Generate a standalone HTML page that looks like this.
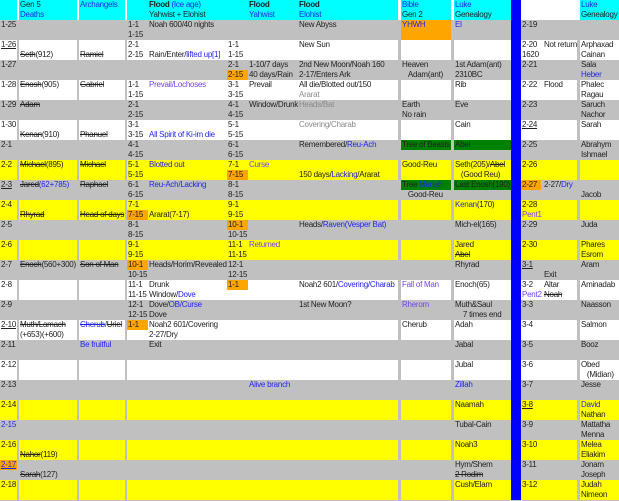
<!DOCTYPE html>
<html><head><meta charset="utf-8"><style>
*{margin:0;padding:0;box-sizing:border-box}
body{width:619px;height:501px;background:#c0c0c0;overflow:hidden;font-family:"Liberation Sans",Arial,sans-serif;font-size:8px;letter-spacing:-0.25px;color:#222}
table{border-collapse:separate;border-spacing:0;table-layout:fixed;width:619px}
td{height:20px;line-height:10px;vertical-align:top;white-space:nowrap;overflow:visible;padding:0 0 0 1px}
tr.g td{background:#c0c0c0}
tr.w td{background:#fff}
tr.y td{background:#ff0}
tr.h td{background:#0ff;height:20px}
td:nth-child(1),td:nth-child(2),td:nth-child(3){box-shadow:inset -2px 0 #c0c0c0}
td:nth-child(8),td:nth-child(9),td:nth-child(13){box-shadow:inset -3px 0 #c0c0c0}
tr.h td:nth-child(1),tr.h td:nth-child(2),tr.h td:nth-child(3){box-shadow:inset -2px 0 #fff}
tr.h td:nth-child(8),tr.h td:nth-child(9),tr.h td:nth-child(13){box-shadow:inset -3px 0 #fff}
tr td:nth-child(11){background:#0000ff !important;box-shadow:none}
tr.h td:nth-child(12),tr.h td:nth-child(13){background:#fff}
b{font-weight:bold}
.b{color:#2323f0}.p{color:#7040ff}.gy{color:#8a8a8a}
s{text-decoration:line-through}
u{text-decoration:underline}
.o{background:#ffa500;margin-left:-1px;padding-left:1px}
.gr{background:#008000;margin-left:-1px;padding-left:1px;margin-right:3px}
</style></head><body>
<table>
<colgroup><col style="width:19px"><col style="width:60px"><col style="width:48px"><col style="width:21px"><col style="width:79px"><col style="width:21px"><col style="width:50px"><col style="width:103px"><col style="width:53px"><col style="width:57px"><col style="width:10px"><col style="width:20px"><col style="width:39px"><col style="width:39px"></colgroup>
<tr class="h"><td></td><td>Gen 5<br><span class="b">Deaths</span></td><td><span class="b">Archangels</span></td><td></td><td><b>Flood</b> <span class="b">(Ice age)</span><br>Yahwist + Elohist</td><td></td><td><b>Flood</b><br><span class="b">Yahwist</span></td><td><b>Flood</b><br><span class="b">Elohist</span></td><td><span class="b">Bible</span><br>Gen 2</td><td><span class="b">Luke</span><br>Genealogy</td><td></td><td></td><td></td><td><span class="b">Luke</span><br>Genealogy</td></tr>
<tr class="g"><td>1-25</td><td></td><td></td><td>1-1<br>1-15</td><td>Noah 600/40 nights</td><td></td><td></td><td>New Abyss</td><td style="background:#ffa500"><span class="b">YHWH</span></td><td><span class="b">El</span></td><td></td><td>2-19</td><td></td><td></td></tr>
<tr class="w"><td><u>1-26</u></td><td><br><s>Seth</s>(912)</td><td><br><s>Ramiel</s></td><td>2-1<br>2-15</td><td><br>Rain/Enter/<span class="b">lifted up[1]</span></td><td>1-1<br>1-15</td><td></td><td>New Sun</td><td></td><td></td><td></td><td>2-20<br>1620</td><td>&nbsp;Not return</td><td>Arphaxad<br>Cainan</td></tr>
<tr class="g"><td>1-27</td><td></td><td></td><td></td><td></td><td>2-1<div class="o">2-15</div></td><td>1-10/7 days<br>40 days/Rain</td><td>2nd New Moon/Noah 160<br>2-17/Enters Ark</td><td>Heaven<br>&nbsp;&nbsp;&nbsp;Adam(ant)</td><td>1st Adam(ant)<br>2310BC</td><td></td><td>2-21</td><td></td><td>Sala<br><span class="b">Heber</span></td></tr>
<tr class="w"><td>1-28</td><td><s>Enosh</s>(905)</td><td><s>Gabriel</s></td><td>1-1<br>1-15</td><td><span class="p">Prevail/Lochoses</span></td><td>3-1<br>3-15</td><td>Prevail</td><td>All die/Blotted out/150<br><span class="gy">Ararat</span></td><td></td><td>Rib</td><td></td><td>2-22</td><td>&nbsp;Flood</td><td>Phalec<br>Ragau</td></tr>
<tr class="g"><td>1-29</td><td><s>Adam</s></td><td></td><td>2-1<br>2-15</td><td></td><td>4-1<br>4-15</td><td>Window/Drunk</td><td><span class="gy">Heads/Bat</span></td><td>Earth<br>No rain</td><td>Eve</td><td></td><td>2-23</td><td></td><td>Saruch<br>Nachor</td></tr>
<tr class="w"><td>1-30</td><td><br><s>Kenan</s>(910)</td><td><br><s>Phanuel</s></td><td>3-1<br>3-15</td><td><br><span class="b">All Spirit of Ki-im die</span></td><td>5-1<br>5-15</td><td></td><td><span class="gy">Covering/Charab</span></td><td></td><td>Cain</td><td></td><td><u>2-24</u></td><td></td><td>Sarah</td></tr>
<tr class="g"><td>2-1</td><td></td><td></td><td>4-1<br>4-15</td><td></td><td>6-1<br>6-15</td><td></td><td>Remembered/<span class="b">Reu-Ach</span></td><td><div class="gr">Tree of Beasts</div></td><td><div class="gr" style="margin-right:0">Abel</div></td><td></td><td>2-25</td><td></td><td>Abrahym<br>Ishmael</td></tr>
<tr class="y"><td>2-2</td><td><s>Michael</s>(895)</td><td><s>Michael</s></td><td>5-1<br>5-15</td><td><span class="b">Blotted out</span></td><td>7-1<div class="o">7-15</div></td><td><span class="p">Curse</span></td><td><br>150 days/<span class="b">Lacking</span>/Ararat</td><td>Good-Reu</td><td>Seth(205)/<s>Abel</s><br>&nbsp;&nbsp;&nbsp;(Good Reu)</td><td></td><td>2-26</td><td></td><td></td></tr>
<tr class="g"><td><u>2-3</u></td><td><s>Jared</s><span class="b">(62+785)</span></td><td><s>Raphael</s></td><td>6-1<br>6-15</td><td><span class="b">Reu-Ach/Lacking</span></td><td>8-1<br>8-15</td><td></td><td></td><td><div class="gr">Tree <span class="b">Manah</span></div>&nbsp;&nbsp;&nbsp;Good-Reu</td><td><div class="gr" style="margin-right:0">Last Enosh(190)</div></td><td></td><td><div class="o">2-27</div></td><td>&nbsp;2-27/<span class="b">Dry</span></td><td><br>Jacob</td></tr>
<tr class="y"><td>2-4</td><td><br><s>Rhyrad</s></td><td><br><s>Head of days</s></td><td>7-1<div class="o">7-15</div></td><td><br>Ararat(7-17)</td><td>9-1<br>9-15</td><td></td><td></td><td></td><td><span class="b">Kenan</span>(170)</td><td></td><td>2-28<br><span class="p">Pent1</span></td><td></td><td></td></tr>
<tr class="g"><td>2-5</td><td></td><td></td><td>8-1<br>8-15</td><td></td><td><div class="o">10-1</div>10-15</td><td></td><td>Heads/<span class="b">Raven(Vesper Bat)</span></td><td></td><td>Mich-el(165)</td><td></td><td>2-29</td><td></td><td>Juda</td></tr>
<tr class="y"><td>2-6</td><td></td><td></td><td>9-1<br>9-15</td><td></td><td>11-1<br>11-15</td><td><span class="p">Returned</span></td><td></td><td></td><td>Jared<br><s>Abel</s></td><td></td><td>2-30</td><td></td><td>Phares<br>Esrom</td></tr>
<tr class="g"><td>2-7</td><td><s>Enoch</s>(560+300)</td><td><s>Son of Man</s></td><td><div class="o">10-1</div>10-15</td><td>Heads/Horim/Revealed</td><td>12-1<br>12-15</td><td></td><td></td><td></td><td>Rhyrad</td><td></td><td><u>3-1</u></td><td><br>&nbsp;Exit</td><td>Aram</td></tr>
<tr class="w"><td>2-8</td><td></td><td></td><td>11-1<br>11-15</td><td>Drunk<br>Window/<span class="b">Dove</span></td><td><div class="o">1-1</div></td><td></td><td>Noah2 601/<span class="b">Covering/Charab</span></td><td><span class="p">Fall of Man</span></td><td>Enoch(65)</td><td></td><td>3-2<br><span class="p">Pent2</span></td><td>&nbsp;Altar<br>&nbsp;<s>Noah</s></td><td>Aminadab</td></tr>
<tr class="g"><td>2-9</td><td></td><td></td><td>12-1<br>12-15</td><td>Dove/<span class="b">OB/Curse</span><br>Dove</td><td></td><td></td><td>1st New Moon?</td><td><span class="p">Rherom</span></td><td>Muth&amp;Saul<br>&nbsp;&nbsp;&nbsp;&nbsp;7 times end</td><td></td><td>3-3</td><td></td><td>Naasson</td></tr>
<tr class="w"><td><u>2-10</u></td><td><s>Muth/Lamach</s><br>(+653)(+600)</td><td><s class="b">Cherub</s>/<s>Uriel</s></td><td><div class="o">1-1</div></td><td>Noah2 601/Covering<br>2-27/Dry</td><td></td><td></td><td></td><td>Cherub</td><td>Adah</td><td></td><td>3-4</td><td></td><td>Salmon</td></tr>
<tr class="g"><td>2-11</td><td></td><td><span class="b">Be fruitful</span></td><td></td><td>Exit</td><td></td><td></td><td></td><td></td><td>Jabal</td><td></td><td>3-5</td><td></td><td>Booz</td></tr>
<tr class="w"><td>2-12</td><td></td><td></td><td></td><td></td><td></td><td></td><td></td><td></td><td>Jubal</td><td></td><td>3-6</td><td></td><td>Obed<br>&nbsp;&nbsp;&nbsp;(Midian)</td></tr>
<tr class="g"><td>2-13</td><td></td><td></td><td></td><td></td><td></td><td><span class="b">Alive branch</span></td><td></td><td></td><td><span class="b">Zillah</span></td><td></td><td>3-7</td><td></td><td>Jesse</td></tr>
<tr class="y"><td>2-14</td><td></td><td></td><td></td><td></td><td></td><td></td><td></td><td></td><td>Naamah</td><td></td><td><u>3-8</u></td><td></td><td><span class="b">David</span><br>Nathan</td></tr>
<tr class="g"><td><span class="b">2-15</span></td><td></td><td></td><td></td><td></td><td></td><td></td><td></td><td></td><td>Tubal-Cain</td><td></td><td>3-9</td><td></td><td>Mattatha<br>Menna</td></tr>
<tr class="y"><td>2-16</td><td><br><s>Nahor</s>(119)</td><td></td><td></td><td></td><td></td><td></td><td></td><td></td><td>Noah3</td><td></td><td>3-10</td><td></td><td>Melea<br>Eliakim</td></tr>
<tr class="g"><td><div class="o" style="margin-right:2px"><u class="b">2-17</u></div></td><td><br><s>Sarah</s>(127)</td><td></td><td></td><td></td><td></td><td></td><td></td><td></td><td>Hym/Shem<br><s>2 Rodim</s></td><td></td><td>3-11</td><td></td><td>Jonam<br>Joseph</td></tr>
<tr class="y"><td>2-18</td><td></td><td></td><td></td><td></td><td></td><td></td><td></td><td></td><td>Cush/Elam</td><td></td><td>3-12</td><td></td><td>Judah<br>Nimeon</td></tr>
</table>
</body></html>
